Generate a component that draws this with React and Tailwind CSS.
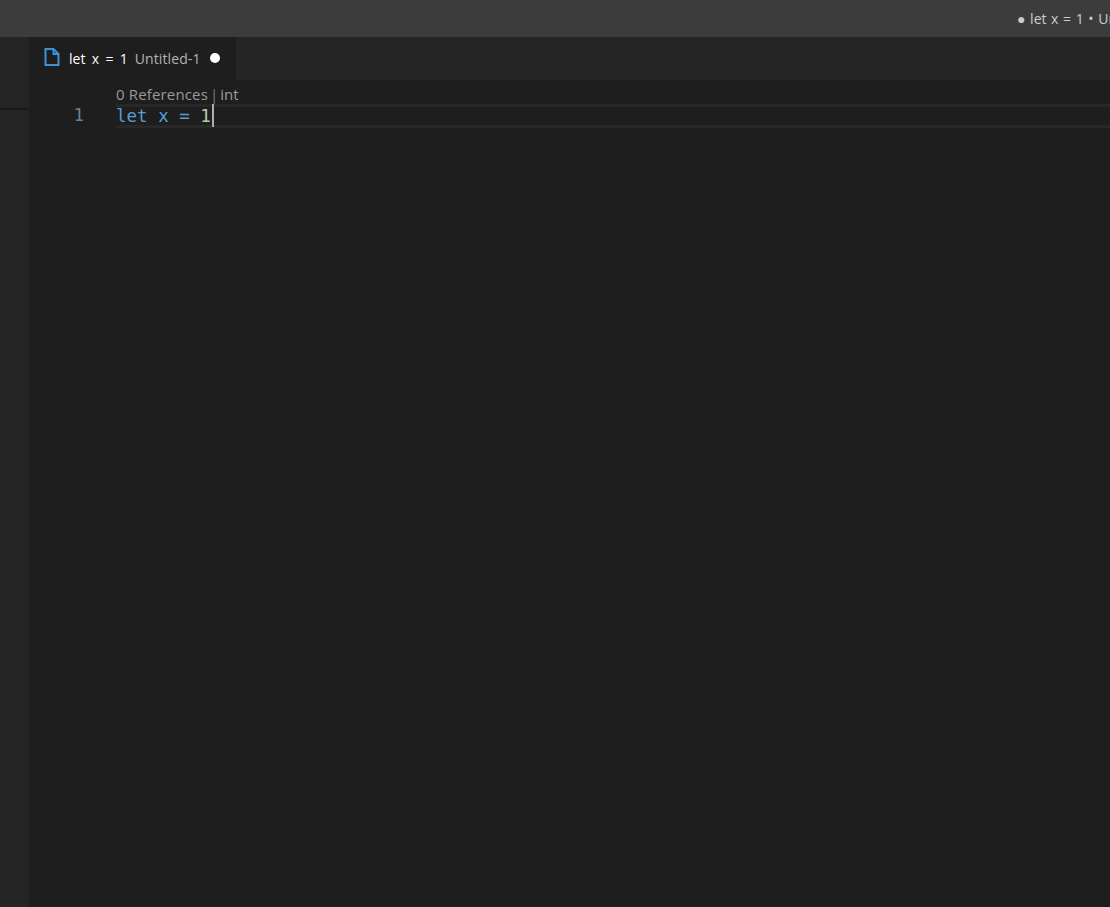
const App = () => {
  return (
    <div className="flex flex-col h-screen w-full overflow-hidden bg-[#1e1e1e]" style={{ fontFamily: '"Open Sans", sans-serif' }}>
      <div className="h-[37px] shrink-0 bg-[#3c3c3c] overflow-hidden whitespace-nowrap pl-[1017px] pt-[9px] text-[14px] leading-[19px] text-[#cccccc] [word-spacing:1px]">
        ● let x = 1 • Untitled-1
      </div>
      <div className="flex flex-1 min-h-0">
        <div className="w-[29px] shrink-0 bg-[#252526]">
          <div className="h-[73px] border-b-2 border-[#1a1a1a]"></div>
        </div>
        <div className="flex-1 min-w-0 flex flex-col">
          <div className="h-[43px] shrink-0 flex bg-[#252526]">
            <div className="w-[207px] flex items-center bg-[#1e1e1e] pl-[15px] text-[14px]">
              <svg width="16" height="18" viewBox="0 0 16 18" fill="none" stroke="#3794d8" strokeWidth="2" className="mb-[4px]">
                <path d="M1.5 1h8l5 5v11h-13z" />
                <path d="M9.5 1v5h5" />
              </svg>
              <span className="ml-[9px] text-white [word-spacing:2.7px]">let x = 1</span>
              <span className="ml-[7px] text-[#b4b4b4] tracking-[0.1px]">Untitled-1</span>
              <span className="ml-[9px] mb-[2px] w-[10px] h-[10px] rounded-full bg-white"></span>
            </div>
          </div>
          <div className="flex-1 bg-[#1e1e1e]">
            <div className="pl-[87px] pt-[5px] h-[24px] text-[15px] leading-[19px] text-[#999999] whitespace-nowrap">
              <span className="tracking-[0.15px]">0 References</span>
              <span className="ml-[2px] text-[#8f7a66]">|</span>
              <span className="ml-[2px] text-[#a39a90]">int</span>
            </div>
            <div className="flex h-[24px]">
              <div className="w-[55px] text-right text-[17.5px] leading-[23px] text-[#6e7f8d]" style={{ fontFamily: '"DejaVu Sans Mono", monospace' }}>1</div>
              <div className="flex-1 ml-[32px] border-y-[3px] border-[#282828] text-[17.5px] leading-[19px] text-[#569cd6] whitespace-nowrap" style={{ fontFamily: '"DejaVu Sans Mono", monospace' }}>
                let x = <span className="text-[#b5cea8]">1</span>
                <span className="inline-block align-top w-[2px] h-[23px] -mt-[3px] ml-[1px] bg-[#aeafad]"></span>
              </div>
            </div>
          </div>
        </div>
      </div>
    </div>
  );
};

export default App;
